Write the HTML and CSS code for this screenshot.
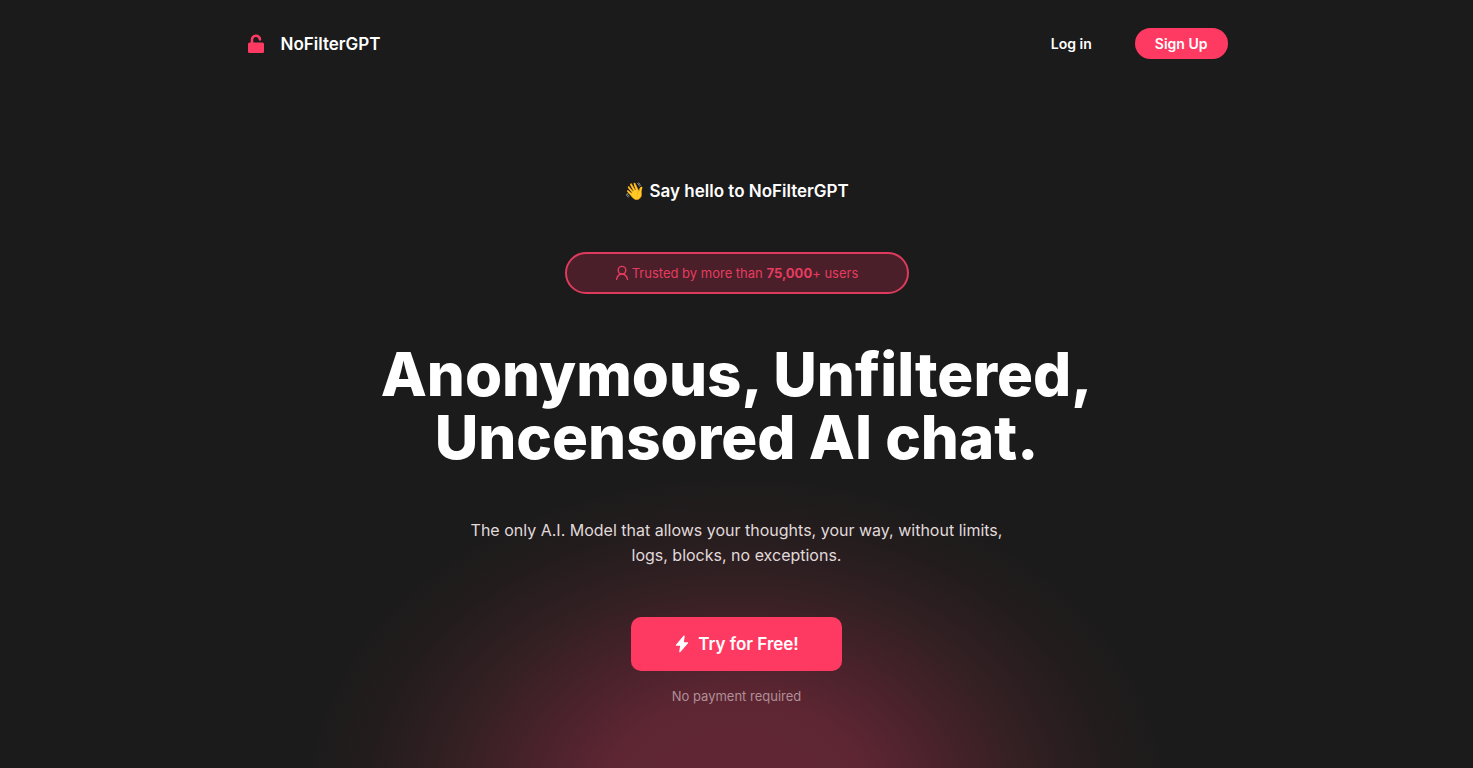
FILE: index.html
```html
<!DOCTYPE html>
<html lang="en">
<head>
  <meta charset="UTF-8" />
  <meta name="viewport" content="width=device-width, initial-scale=1.0" />
  <title>NoFilterGPT</title>
  <link rel="stylesheet" href="styles.css">
</head>
<body>
  <div class="page">
    <header class="header">
      <a href="/" class="brand">
        <svg class="brand-icon" viewBox="0 0 18 20" aria-hidden="true">
          <path d="M5 10V6a4 4 0 0 1 8-.6" fill="none" stroke="currentColor" stroke-width="2.6" stroke-linecap="round" />
          <rect x="1" y="8.5" width="16" height="10.5" rx="1.5" fill="currentColor" />
        </svg>
        <span>NoFilterGPT</span>
      </a>
      <nav class="nav">
        <a href="/login" class="nav-link">Log in</a>
        <a href="/signup" class="nav-btn">Sign Up</a>
      </nav>
    </header>

    <!-- Hero -->
    <main class="hero">
      <p class="hello">👋 Say hello to NoFilterGPT</p>

      <div class="trusted">
        <svg class="trusted-icon" viewBox="0 0 14 16" fill="none" stroke="currentColor" stroke-width="1.4" stroke-linecap="round" aria-hidden="true">
          <circle cx="7" cy="5.2" r="3.8" />
          <path d="M1.5 14.4C2.3 11 4.300 9 7 9s4.700 2 5.500 5.400" />
        </svg>
        <span>Trusted by more than <strong>75,000</strong>+ users</span>
      </div>

      <h1>Anonymous, Unfiltered, Uncensored AI chat.</h1>

      <p class="subtitle">The only A.I. Model that allows your thoughts, your way, without limits, logs, blocks, no exceptions.</p>

      <a href="/signup" class="cta">
        <svg class="cta-icon" viewBox="0 0 14 18" aria-hidden="true">
          <path d="M8.5.8 1 9.7c-.4.5-.1 1 .5 1h3.7L4.2 16.6c-.1.8.7 1.1 1.2.5L13 8.3c.4-.5.1-1-.5-1H8.8L9.7 1.4C9.8.6 9 .2 8.5.8z" fill="currentColor" />
        </svg>
        <span>Try for Free!</span>
      </a>
      <p class="note">No payment required</p>
    </main>
  </div>
</body>
</html>
```
FILE: styles.css
```css
* {
  margin: 0;
  padding: 0;
  box-sizing: border-box;
}

body {
  font-family: Inter, "Liberation Sans", sans-serif;
  background: #1b1b1b;
  color: #fff;
}

a {
  color: inherit;
  text-decoration: none;
}

.page {
  min-height: 100vh;
  background: radial-gradient(440px 330px at 50% 800px,
    #632736 0%,
    #5e2633 30%,
    #4a222b 47%,
    #332023 66%,
    #231c1d 84%,
    #1b1b1b 100%);
}

.header {
  display: flex;
  justify-content: space-between;
  align-items: center;
  max-width: 1022px;
  margin: 0 auto;
  padding: 28px 20px;
}

.brand {
  display: flex;
  align-items: center;
  gap: 16px;
  padding-left: 1px;
  font-size: 17px;
  font-weight: 600;
}

.brand-icon {
  width: 18px;
  height: 20px;
  color: #ff3a62;
}

.nav {
  display: flex;
  align-items: center;
  gap: 43px;
  font-size: 14px;
  font-weight: 600;
}

.nav-btn {
  padding: 7px 20px;
  line-height: 17px;
  border-radius: 16px;
  background: #ff3a62;
}

.hero {
  display: flex;
  flex-direction: column;
  align-items: center;
  padding: 92px 20px 60px;
  text-align: center;
}

.hello {
  font-size: 17px;
  line-height: 24px;
  font-weight: 600;
}

.trusted {
  display: flex;
  justify-content: center;
  align-items: center;
  gap: 3px;
  width: 344px;
  max-width: 100%;
  height: 42px;
  margin-top: 49px;
  border: 2px solid #dc3b5d;
  border-radius: 21px;
  background: #4a1f29;
  color: #e63c60;
  font-size: 13px;
}

.trusted-icon {
  width: 14px;
  height: 16px;
}

h1 {
  max-width: 760px;
  margin-top: 49px;
  font-size: 60px;
  line-height: 63px;
  font-weight: 800;
}

.subtitle {
  max-width: 550px;
  margin-top: 49px;
  color: #e0dadb;
  font-size: 16px;
  line-height: 25px;
}

.cta {
  display: flex;
  align-items: center;
  gap: 8px;
  margin-top: 49px;
  padding: 15px 43px;
  border-radius: 10px;
  background: #ff3a62;
  font-size: 17px;
  line-height: 24px;
  font-weight: 600;
}

.cta-icon {
  width: 16px;
  height: 18px;
}

.note {
  margin-top: 16px;
  color: #b08f97;
  font-size: 13px;
  line-height: 18px;
}
```
